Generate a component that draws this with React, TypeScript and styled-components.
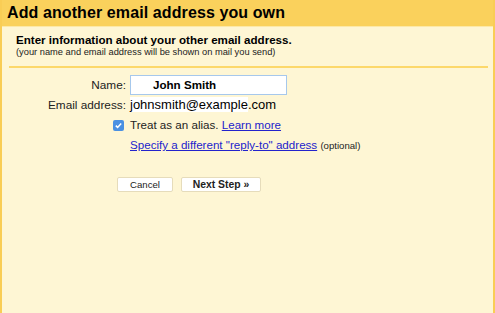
import React from 'react';
import styled, { createGlobalStyle } from 'styled-components';

const GlobalStyle = createGlobalStyle`
  html, body {
    margin: 0;
    padding: 0;
    background: #fef6d4;
  }
  #root {
    width: 495px;
    height: 313px;
  }
`;

const Frame = styled.div`
  box-sizing: border-box;
  width: 495px;
  height: 313px;
  background: #fef6d4;
  border-left: 2px solid #f9cd55;
  border-right: 2px solid #f9cd55;
  font-family: 'Liberation Sans', Arial, sans-serif;
  color: #000;
  display: flex;
  flex-direction: column;
`;

const TitleBar = styled.div`
  height: 26px;
  background: #fad15c;
  border-bottom: 1px solid #fde9a6;
  padding-left: 5px;
  display: flex;
  align-items: center;
  font-weight: bold;
  font-size: 16px;
  letter-spacing: 0.1px;
`;

const Intro = styled.div`
  margin: 6px 5px 0 7px;
  padding: 0 0 8px 7px;
  border-bottom: 2px solid #fcd86a;
`;

const IntroTitle = styled.div`
  font-weight: bold;
  font-size: 11.6px;
  line-height: 14px;
`;

const IntroNote = styled.div`
  font-size: 9.3px;
  line-height: 11px;
  color: #222;
`;

const Form = styled.div`
  display: grid;
  grid-template-columns: 124px auto;
  column-gap: 4px;
  align-items: center;
  margin-top: 7px;
  font-size: 11.8px;
`;

const Label = styled.div`
  text-align: right;
  color: #222;
  height: 20px;
  line-height: 20px;
`;

const NameInput = styled.div`
  box-sizing: border-box;
  width: 157px;
  height: 20px;
  border: 1px solid #a6c8ec;
  background: #fff;
  padding-left: 22px;
  font-weight: bold;
  font-size: 11.6px;
  line-height: 18px;
`;

const EmailValue = styled.div`
  font-size: 13px;
  height: 20px;
  line-height: 20px;
  & > span {
    background: #fff;
  }
`;

const CheckCell = styled.div`
  display: flex;
  justify-content: flex-end;
  align-items: center;
  height: 20px;
`;

const CheckBox = styled.div`
  width: 11px;
  height: 11px;
  border-radius: 2px;
  background: #4a90e2;
  display: flex;
  align-items: center;
  justify-content: center;
  margin-right: 2px;
`;

const Line = styled.div`
  font-size: 11.6px;
  height: 20px;
  line-height: 20px;
  color: #222;
`;

const Link = styled.a`
  color: #2323cc;
  text-decoration: underline;
`;

const Optional = styled.span`
  font-size: 9.6px;
  color: #222;
`;

const Actions = styled.div`
  display: flex;
  gap: 8px;
  margin: 22px 0 0 115px;
`;

const Button = styled.div<{ $primary?: boolean }>`
  box-sizing: border-box;
  width: ${(p) => (p.$primary ? '80px' : '56px')};
  height: 15px;
  background: #fff;
  border: 1px solid #e6dcbb;
  border-radius: 2px;
  font-size: ${(p) => (p.$primary ? '10.4px' : '9.6px')};
  font-weight: ${(p) => (p.$primary ? 'bold' : 'normal')};
  color: #222;
  display: flex;
  align-items: center;
  justify-content: center;
`;

const App: React.FC = () => {
  return (
    <>
      <GlobalStyle />
      <Frame>
        <TitleBar>Add another email address you own</TitleBar>
        <Intro>
          <IntroTitle>Enter information about your other email address.</IntroTitle>
          <IntroNote>(your name and email address will be shown on mail you send)</IntroNote>
        </Intro>
        <Form>
          <Label>Name:</Label>
          <div>
            <NameInput>John Smith</NameInput>
          </div>
          <Label>Email address:</Label>
          <EmailValue>
            <span>johnsmith@example</span>.com
          </EmailValue>
          <CheckCell>
            <CheckBox>
              <svg width="9" height="9" viewBox="0 0 9 9">
                <path d="M1.8 4.6 L3.6 6.4 L7.2 2.4" stroke="#fff" strokeWidth="1.5" fill="none" />
              </svg>
            </CheckBox>
          </CheckCell>
          <Line>
            Treat as an alias. <Link>Learn more</Link>
          </Line>
          <div />
          <Line>
            <Link>Specify a different "reply-to" address</Link> <Optional>(optional)</Optional>
          </Line>
        </Form>
        <Actions>
          <Button>Cancel</Button>
          <Button $primary>Next Step »</Button>
        </Actions>
      </Frame>
    </>
  );
};

export default App;
